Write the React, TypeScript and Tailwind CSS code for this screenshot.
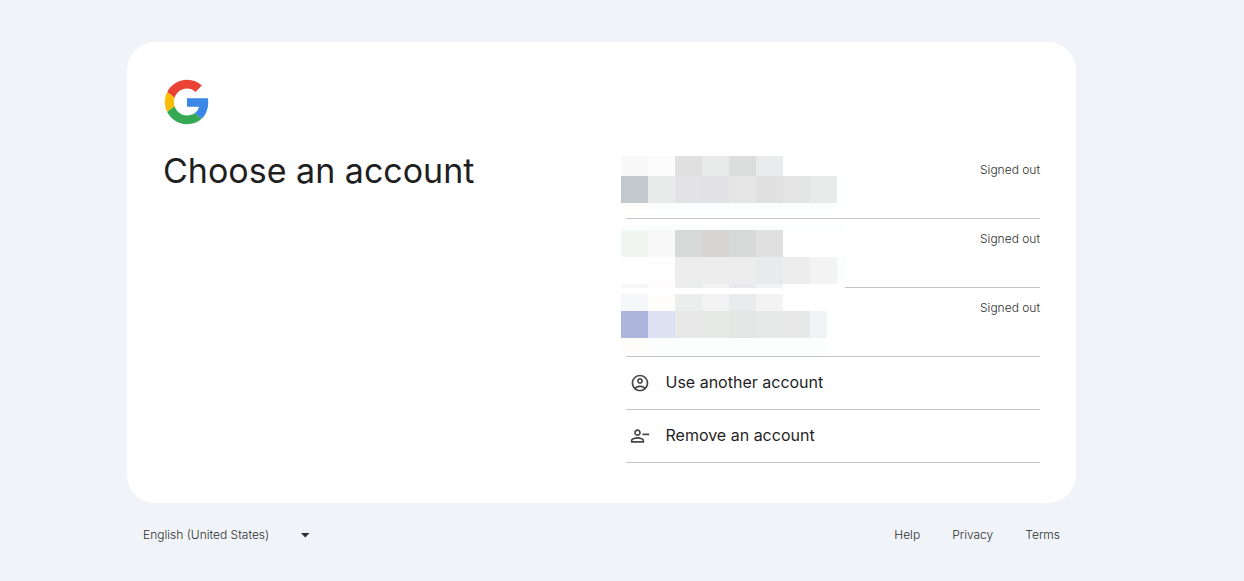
type Cell = { color: string; width?: string };

type Band = { height: string; cells: Cell[] };

type Account = { id: string; label: string; width: string; bands: Band[] };

const row = (height: string, ...colors: string[]): Band => ({
  height,
  cells: colors.map((color) => ({ color })),
});

// Redacted account details, drawn as blocks of flat colour
const accounts: Account[] = [
  {
    id: "first",
    label: "First account",
    width: "w-[216px]",
    bands: [
      row("h-5", "bg-[#f9f9f9]", "bg-[#fcfcfc]", "bg-[#e0e0e0]", "bg-[#e8ebe9]", "bg-[#dcdddd]", "bg-[#eaebee]"),
      row("h-[27px]", "bg-[#c3c8cc]", "bg-[#e8ebe9]", "bg-[#e3e3e5]", "bg-[#e2e2e4]", "bg-[#e6e6e6]", "bg-[#e0e0e0]", "bg-[#e4e4e5]", "bg-[#e8ebe9]"),
      { height: "h-2", cells: [{ color: "bg-[#fffdfc]" }, { color: "bg-[#fcfefe]", width: "w-[189px]" }] },
    ],
  },
  {
    id: "second",
    label: "Second account",
    width: "w-56",
    bands: [
      { height: "h-[5px]", cells: [{ color: "bg-[#fcfefd]", width: "w-56" }] },
      row("h-[27px]", "bg-[#f1f6f3]", "bg-[#f9f9f9]", "bg-[#d7dad8]", "bg-[#d7d4d2]", "bg-[#d7dad8]", "bg-[#e0e0e0]"),
      {
        height: "h-[27px]",
        cells: [
          { color: "bg-white" },
          { color: "bg-[#fefefe]" },
          { color: "bg-[#ededed]", width: "w-[81px]" },
          { color: "bg-[#e9eaed]" },
          { color: "bg-[#ededed]" },
          { color: "bg-[#f3f3f3]" },
          { color: "bg-[#fbfefd]", width: "w-2" },
        ],
      },
      row("h-1", "bg-[#f6f7fa]", "bg-[#fefdfb]", "bg-[#eceeed]", "bg-[#f3f3f3]", "bg-[#e9eaed]", "bg-[#f1f2f3]"),
    ],
  },
  {
    id: "third",
    label: "Third account",
    width: "w-[206px]",
    bands: [
      row("h-[17px]", "bg-[#f5f7fa]", "bg-[#fffdfa]", "bg-[#eceeed]", "bg-[#f3f3f3]", "bg-[#e9ebed]", "bg-[#f3f3f3]"),
      {
        height: "h-[27px]",
        cells: [
          { color: "bg-[#aeb5dc]" },
          { color: "bg-[#dee1f2]" },
          { color: "bg-[#e8e8e8]" },
          { color: "bg-[#e7e9e7]" },
          { color: "bg-[#e5e7e6]" },
          { color: "bg-[#e7e9e8]" },
          { color: "bg-[#e8e8e8]" },
          { color: "bg-[#f2f3f6]", width: "w-[17px]" },
        ],
      },
      { height: "h-4", cells: [{ color: "bg-[#fffdfb]" }, { color: "bg-[#fcfefd]", width: "w-[179px]" }] },
    ],
  },
];

function Mosaic({ width, bands }: { width: string; bands: Band[] }) {
  return (
    <span aria-hidden="true" className={`absolute -left-[5px] top-1.5 z-10 block bg-white ${width}`}>
      {bands.map((band, i) => (
        <span key={i} className={`flex ${band.height}`}>
          {band.cells.map((cell, j) => (
            <span key={j} className={`${cell.width ?? "w-[27px]"} ${cell.color}`} />
          ))}
        </span>
      ))}
    </span>
  );
}

function GoogleLogo() {
  return (
    <svg className="size-12" viewBox="-2 -2 52 52" role="img" aria-label="Google">
      <path fill="#ea4335" d="M24 9.5c3.54 0 6.71 1.22 9.21 3.6l6.85-6.85C35.9 2.38 30.47 0 24 0 14.62 0 6.51 5.38 2.56 13.22l7.98 6.19C12.43 13.72 17.74 9.5 24 9.5z" />
      <path fill="#3b87e8" d="M46.98 24.55c0-1.57-.15-3.09-.38-4.55H24v9.02h12.94c-.58 2.96-2.26 5.48-4.78 7.18l7.73 6c4.51-4.18 7.09-10.36 7.09-17.65z" />
      <path fill="#fbbc05" d="M10.53 28.59c-.48-1.45-.76-2.99-.76-4.59s.27-3.14.76-4.59l-7.98-6.19C.92 16.46 0 20.12 0 24c0 3.88.92 7.54 2.56 10.78l7.97-6.19z" />
      <path fill="#34a853" d="M24 48c6.48 0 11.93-2.13 15.89-5.81l-7.73-6c-2.15 1.45-4.92 2.3-8.16 2.3-6.26 0-11.57-4.22-13.47-9.91l-7.98 6.19C6.51 42.62 14.62 48 24 48z" />
    </svg>
  );
}

function AccountIcon() {
  return (
    <svg className="size-5 shrink-0" viewBox="0 0 24 24" fill="currentColor" aria-hidden="true">
      <path d="M12 2C6.48 2 2 6.48 2 12s4.48 10 10 10 10-4.48 10-10S17.52 2 12 2zM7.35 18.5C8.66 17.56 10.26 17 12 17s3.34.56 4.65 1.5C15.34 19.44 13.74 20 12 20s-3.34-.56-4.65-1.5zm10.79-1.38C16.45 15.8 14.32 15 12 15s-4.45.8-6.14 2.12C4.7 15.73 4 13.95 4 12c0-4.42 3.58-8 8-8s8 3.58 8 8c0 1.95-.7 3.73-1.86 5.12zM12 6c-1.93 0-3.5 1.57-3.5 3.5S10.07 13 12 13s3.5-1.57 3.5-3.5S13.93 6 12 6zm0 5c-.83 0-1.5-.67-1.5-1.5S11.17 8 12 8s1.5.67 1.5 1.5S12.83 11 12 11z" />
    </svg>
  );
}

function RemoveIcon() {
  return (
    <svg className="size-5 shrink-0" viewBox="0 0 24 24" fill="currentColor" aria-hidden="true">
      <path d="M13 8c0-2.21-1.79-4-4-4S5 5.79 5 8s1.79 4 4 4 4-1.79 4-4zm-2 0c0 1.1-.9 2-2 2s-2-.9-2-2 .9-2 2-2 2 .9 2 2zM1 17.2V20h16v-2.8c0-2.4-5.33-3.9-8-3.9s-8 1.5-8 3.9zm2 .8v-.8c.4-.7 3.3-1.9 6-1.9s5.6 1.2 6 1.9v.8H3zM15 9h8v2h-8z" />
    </svg>
  );
}

export default function App() {
  return (
    <div className="min-h-screen bg-[#f0f3f8] pt-[42px] pr-[168px] pl-[127px] font-['Inter',sans-serif] text-[#1f1f1f]">
      <main className="rounded-[28px] bg-white px-9 pt-9 pb-10">
        <GoogleLogo />
        <div className="mt-6 grid grid-cols-2 gap-12">
          <h1 className="text-[34px] leading-[42px] font-normal">Choose an account</h1>
          <ul>
            {accounts.map((account) => (
              <li key={account.id} className="relative border-b border-[#c4c7c5]">
                <button
                  type="button"
                  aria-label={`${account.label}, signed out`}
                  className="flex h-17 w-full items-start justify-end pt-3 text-xs font-light text-[#2d2f2e]"
                >
                  <Mosaic width={account.width} bands={account.bands} />
                  Signed out
                </button>
              </li>
            ))}
            <li className="border-b border-[#c4c7c5]">
              <button type="button" className="flex h-13 w-full items-center gap-4 pl-1 text-left text-base">
                <span className="text-[#444746]">
                  <AccountIcon />
                </span>
                <span className="pb-0.5">Use another account</span>
              </button>
            </li>
            <li className="border-b border-[#c4c7c5]">
              <button type="button" className="flex h-13 w-full items-center gap-4 pl-1 text-left text-base">
                <span className="text-[#444746]">
                  <RemoveIcon />
                </span>
                <span className="pb-0.5">Remove an account</span>
              </button>
            </li>
          </ul>
        </div>
      </main>

      <footer className="flex items-center justify-between px-4 py-6 text-xs font-light text-[#2d2f2e]">
        <div className="relative flex items-center">
          <select aria-label="Language" className="w-44 appearance-none bg-transparent">
            <option>English (United States)</option>
          </select>
          <svg className="pointer-events-none absolute right-2 h-[5px] w-2.5" viewBox="0 0 10 5" fill="currentColor" aria-hidden="true">
            <path d="M0 0h8.5L4.2 4.5z" />
          </svg>
        </div>
        <nav className="flex gap-8">
          <a href="#help">Help</a>
          <a href="#privacy">Privacy</a>
          <a href="#terms">Terms</a>
        </nav>
      </footer>
    </div>
  );
}
